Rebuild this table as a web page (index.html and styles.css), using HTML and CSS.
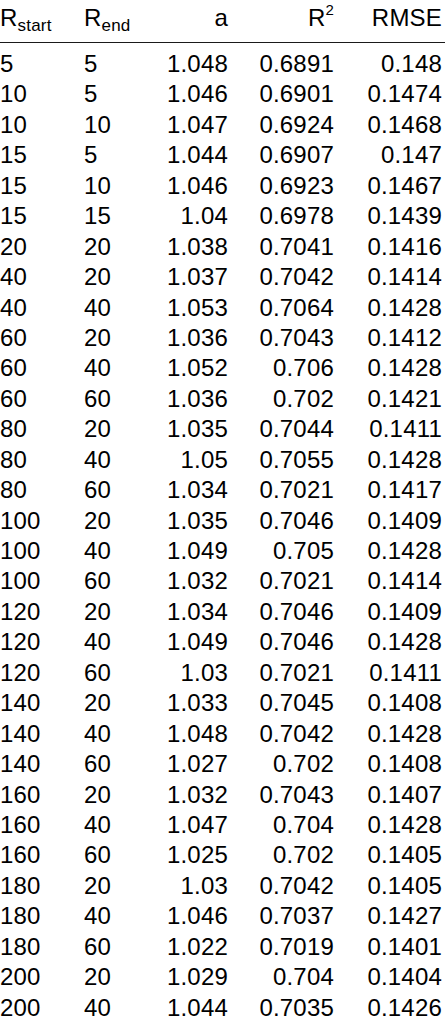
FILE: index.html
```html
<!DOCTYPE html>
<html>
<head>
<meta charset="utf-8">
<link rel="stylesheet" href="styles.css">
</head>
<body>
<div class="table">
  <div class="row head">
    <div class="c l">R<sub>start</sub></div>
    <div class="c l">R<sub>end</sub></div>
    <div class="c r">a</div>
    <div class="c r">R<sup>2</sup></div>
    <div class="c r">RMSE</div>
  </div>
  <div class="body">
    <div class="row"><div class="c l">5</div><div class="c l">5</div><div class="c r">1.048</div><div class="c r">0.6891</div><div class="c r">0.148</div></div>
    <div class="row"><div class="c l">10</div><div class="c l">5</div><div class="c r">1.046</div><div class="c r">0.6901</div><div class="c r">0.1474</div></div>
    <div class="row"><div class="c l">10</div><div class="c l">10</div><div class="c r">1.047</div><div class="c r">0.6924</div><div class="c r">0.1468</div></div>
    <div class="row"><div class="c l">15</div><div class="c l">5</div><div class="c r">1.044</div><div class="c r">0.6907</div><div class="c r">0.147</div></div>
    <div class="row"><div class="c l">15</div><div class="c l">10</div><div class="c r">1.046</div><div class="c r">0.6923</div><div class="c r">0.1467</div></div>
    <div class="row"><div class="c l">15</div><div class="c l">15</div><div class="c r">1.04</div><div class="c r">0.6978</div><div class="c r">0.1439</div></div>
    <div class="row"><div class="c l">20</div><div class="c l">20</div><div class="c r">1.038</div><div class="c r">0.7041</div><div class="c r">0.1416</div></div>
    <div class="row"><div class="c l">40</div><div class="c l">20</div><div class="c r">1.037</div><div class="c r">0.7042</div><div class="c r">0.1414</div></div>
    <div class="row"><div class="c l">40</div><div class="c l">40</div><div class="c r">1.053</div><div class="c r">0.7064</div><div class="c r">0.1428</div></div>
    <div class="row"><div class="c l">60</div><div class="c l">20</div><div class="c r">1.036</div><div class="c r">0.7043</div><div class="c r">0.1412</div></div>
    <div class="row"><div class="c l">60</div><div class="c l">40</div><div class="c r">1.052</div><div class="c r">0.706</div><div class="c r">0.1428</div></div>
    <div class="row"><div class="c l">60</div><div class="c l">60</div><div class="c r">1.036</div><div class="c r">0.702</div><div class="c r">0.1421</div></div>
    <div class="row"><div class="c l">80</div><div class="c l">20</div><div class="c r">1.035</div><div class="c r">0.7044</div><div class="c r">0.1411</div></div>
    <div class="row"><div class="c l">80</div><div class="c l">40</div><div class="c r">1.05</div><div class="c r">0.7055</div><div class="c r">0.1428</div></div>
    <div class="row"><div class="c l">80</div><div class="c l">60</div><div class="c r">1.034</div><div class="c r">0.7021</div><div class="c r">0.1417</div></div>
    <div class="row"><div class="c l">100</div><div class="c l">20</div><div class="c r">1.035</div><div class="c r">0.7046</div><div class="c r">0.1409</div></div>
    <div class="row"><div class="c l">100</div><div class="c l">40</div><div class="c r">1.049</div><div class="c r">0.705</div><div class="c r">0.1428</div></div>
    <div class="row"><div class="c l">100</div><div class="c l">60</div><div class="c r">1.032</div><div class="c r">0.7021</div><div class="c r">0.1414</div></div>
    <div class="row"><div class="c l">120</div><div class="c l">20</div><div class="c r">1.034</div><div class="c r">0.7046</div><div class="c r">0.1409</div></div>
    <div class="row"><div class="c l">120</div><div class="c l">40</div><div class="c r">1.049</div><div class="c r">0.7046</div><div class="c r">0.1428</div></div>
    <div class="row"><div class="c l">120</div><div class="c l">60</div><div class="c r">1.03</div><div class="c r">0.7021</div><div class="c r">0.1411</div></div>
    <div class="row"><div class="c l">140</div><div class="c l">20</div><div class="c r">1.033</div><div class="c r">0.7045</div><div class="c r">0.1408</div></div>
    <div class="row"><div class="c l">140</div><div class="c l">40</div><div class="c r">1.048</div><div class="c r">0.7042</div><div class="c r">0.1428</div></div>
    <div class="row"><div class="c l">140</div><div class="c l">60</div><div class="c r">1.027</div><div class="c r">0.702</div><div class="c r">0.1408</div></div>
    <div class="row"><div class="c l">160</div><div class="c l">20</div><div class="c r">1.032</div><div class="c r">0.7043</div><div class="c r">0.1407</div></div>
    <div class="row"><div class="c l">160</div><div class="c l">40</div><div class="c r">1.047</div><div class="c r">0.704</div><div class="c r">0.1428</div></div>
    <div class="row"><div class="c l">160</div><div class="c l">60</div><div class="c r">1.025</div><div class="c r">0.702</div><div class="c r">0.1405</div></div>
    <div class="row"><div class="c l">180</div><div class="c l">20</div><div class="c r">1.03</div><div class="c r">0.7042</div><div class="c r">0.1405</div></div>
    <div class="row"><div class="c l">180</div><div class="c l">40</div><div class="c r">1.046</div><div class="c r">0.7037</div><div class="c r">0.1427</div></div>
    <div class="row"><div class="c l">180</div><div class="c l">60</div><div class="c r">1.022</div><div class="c r">0.7019</div><div class="c r">0.1401</div></div>
    <div class="row"><div class="c l">200</div><div class="c l">20</div><div class="c r">1.029</div><div class="c r">0.704</div><div class="c r">0.1404</div></div>
    <div class="row"><div class="c l">200</div><div class="c l">40</div><div class="c r">1.044</div><div class="c r">0.7035</div><div class="c r">0.1426</div></div>
  </div>
</div>
</body>
</html>
```
FILE: styles.css
```css
html, body {
  margin: 0;
  padding: 0;
  background: #fff;
}
body {
  width: 445px;
  overflow: hidden;
  font-family: "Liberation Sans", Arial, sans-serif;
  font-size: 24px;
  color: #000;
  letter-spacing: 0.2px;
}
.table {
  width: 445px;
}
.row {
  display: grid;
  grid-template-columns: 84px 60px 84px 106px 108px;
  height: 30.45px;
  line-height: 30.45px;
  white-space: nowrap;
}
.head {
  box-sizing: border-box;
  height: 43px;
  padding-top: 2.5px;
  border-bottom: 1.5px solid #1a1a1a;
}
.body {
  padding-top: 6px;
}
.c.l {
  text-align: left;
}
.c.r {
  text-align: right;
}
sub {
  font-size: 17px;
  vertical-align: -5px;
  line-height: 0;
  letter-spacing: 0.2px;
}
sup {
  font-size: 15px;
  vertical-align: 11px;
  line-height: 0;
  letter-spacing: 0.2px;
}
```
